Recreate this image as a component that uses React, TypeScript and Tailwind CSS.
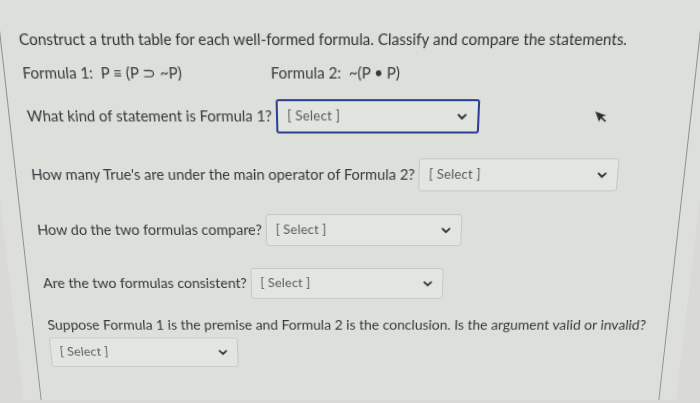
import React from "react";

function Chevron() {
  return (
    <svg width="10" height="7" viewBox="0 0 10 7" className="shrink-0">
      <path d="M1.5 1.5 L5 5 L8.5 1.5" fill="none" stroke="#3a3e42" strokeWidth="2" strokeLinecap="round" />
    </svg>
  );
}

function Select({ focused = false }: { focused?: boolean }) {
  return (
    <div
      className={`w-[198px] h-[34px] flex items-center justify-between pl-[9px] pr-[10px] rounded-[3px] ${
        focused ? "border-2 border-[#2f3f8f] bg-[#e1e5e0]" : "border border-[#c4c8c2] bg-[#e3e6e0]"
      }`}
    >
      <span className="text-[13px] text-[#555a5f] tracking-[0.2px]">[ Select ]</span>
      <Chevron />
    </div>
  );
}

export default function App() {
  return (
    <div className="w-[700px] h-[403px] overflow-hidden bg-[#d9dad7] font-['Lato',sans-serif] text-[#33383d]">
      <div className="h-[424px] bg-[#dde0da] origin-[50%_199px] [transform:perspective(900px)_rotateX(-17deg)]">
        <div className="mx-[18px] h-full border-x border-[#8d918c] pl-[14px] pt-[31px] text-[14.5px]">
          <p className="pl-[3px] leading-[20px] text-[#2e3237] whitespace-nowrap">
            Construct a truth table for each well-formed formula. Classify and compare the statements.
          </p>

          <div className="flex items-center leading-[20px] mt-[12px] pl-[3px]">
            <span className="w-[238px]">Formula 1:&nbsp; P ≡ (P ⊃ ~P)</span>
            <span>Formula 2:&nbsp; ~(P • P)</span>
          </div>

          <div className="flex items-center gap-[4px] mt-[15px] pl-[3px]">
            <span>What kind of statement is Formula 1?</span>
            <Select focused />
          </div>

          <div className="flex items-center gap-[4px] mt-[25px] pl-[1px]">
            <span>How many True's are under the main operator of Formula 2?</span>
            <Select />
          </div>

          <div className="flex items-center gap-[4px] mt-[24px] pl-[1px]">
            <span>How do the two formulas compare?</span>
            <Select />
          </div>

          <div className="flex items-center gap-[4px] mt-[24px] pl-[1px]">
            <span>Are the two formulas consistent?</span>
            <Select />
          </div>

          <p className="mt-[20px] pl-[1px] leading-[20px] whitespace-nowrap">
            Suppose Formula 1 is the premise and Formula 2 is the conclusion. Is the argument valid or invalid?
          </p>
          <div className="mt-[4px] pl-[1px]">
            <Select />
          </div>
        </div>
      </div>

      <svg width="12" height="16" viewBox="0 0 12 16" className="absolute left-[596px] top-[108px] rotate-[-20deg]">
        <path d="M1 1 L1 13 L4 10 L6.5 15 L8.5 14 L6 9 L10.5 9 Z" fill="#2b2e31" stroke="#d8dad5" strokeWidth="0.6" />
      </svg>
    </div>
  );
}
